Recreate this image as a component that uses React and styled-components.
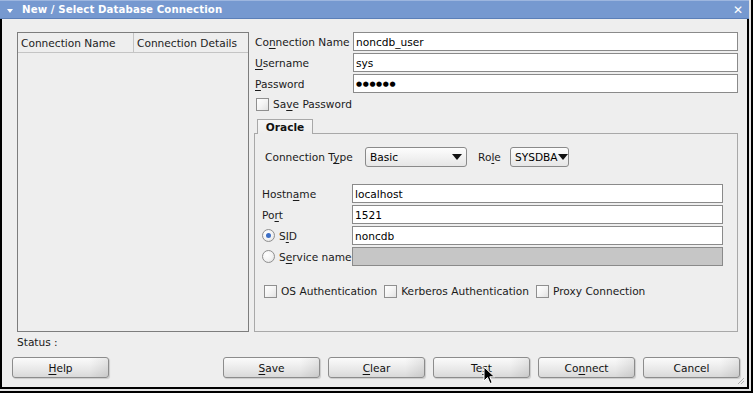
import React from "react";
import styled, { createGlobalStyle } from "styled-components";

const Global = createGlobalStyle`
  html, body { margin: 0; padding: 0; background: #eeeeee; }
  body { font-family: "DejaVu Sans", "Liberation Sans", sans-serif; font-size: 10.6px; color: #1a1a1a; }
  * { box-sizing: border-box; }
`;

const Window = styled.div`
  position: relative;
  width: 753px;
  height: 393px;
  display: flex;
  flex-direction: column;
  background: #e4e4e4;
  border-right: 2px solid #000;
  border-bottom: 2px solid #000;
  padding: 0 2px 2px 0;
`;

const TitleBar = styled.div`
  height: 19px;
  flex: none;
  display: flex;
  align-items: center;
  background: #7699d0;
  border-top: 1px solid #9db6df;
  border-bottom: 1px solid #5b7fb8;
  color: #fff;
  font-weight: bold;
  font-size: 10.2px;
  padding: 0 6px 0 7px;
`;

const Arrow = styled.span`
  width: 0;
  height: 0;
  border-left: 3px solid transparent;
  border-right: 3px solid transparent;
  border-top: 4px solid #fff;
  margin: 2px 9px 0 0;
`;

const Title = styled.span`
  flex: 1;
  letter-spacing: 0.1px;
`;

const Close = styled.span`
  font-size: 12px;
  font-weight: bold;
`;

const Frame = styled.div`
  flex: 1;
  display: flex;
  flex-direction: column;
  background: #eeeeee;
  border-left: 2px solid #000;
  border-right: 2px solid #000;
  border-bottom: 2px solid #000;
  padding: 0 7px 0 10px;
`;

const Main = styled.div`
  display: flex;
  gap: 5px;
  height: 300px;
  margin: 13px 2px 0 5px;
`;

const Table = styled.div`
  width: 232px;
  flex: none;
  border: 1px solid #7d7d7d;
  background: #eeeeee;
`;

const HeadRow = styled.div`
  display: flex;
  height: 20px;
  border-bottom: 1px solid #c4c4c4;
`;

const HeadCell = styled.div`
  width: ${(p) => p.$w}px;
  display: flex;
  align-items: center;
  padding-left: 3px;
  border-right: ${(p) => (p.$last ? "none" : "1px solid #c4c4c4")};
  color: #222;
`;

const Form = styled.div`
  flex: 1;
  display: flex;
  flex-direction: column;
`;

const Fields = styled.div`
  display: flex;
  flex-direction: column;
  gap: ${(p) => p.$gap || 2}px;
  padding-left: ${(p) => p.$pad || 0}px;
  padding-right: ${(p) => p.$right || 0}px;
  margin-top: ${(p) => p.$top || 0}px;
`;

const Row = styled.div`
  display: flex;
  align-items: center;
  height: 19px;
`;

const Label = styled.label`
  width: ${(p) => p.$w}px;
  flex: none;
  padding-left: ${(p) => p.$pad || 0}px;
  display: flex;
  align-items: center;
  gap: 4px;
  color: #1a1a1a;
  white-space: nowrap;
`;

const Input = styled.div`
  flex: 1;
  height: 19px;
  background: ${(p) => (p.$disabled ? "#c6c6c6" : "#ffffff")};
  border: 1px solid #8a8a8a;
  display: flex;
  align-items: center;
  padding-left: 2px;
  font-size: ${(p) => (p.$dots ? "7px" : "inherit")};
  letter-spacing: ${(p) => (p.$dots ? "0.6px" : "0")};
  color: #000;
`;

const U = styled.span`
  text-decoration: underline;
  text-underline-offset: 2px;
`;

const Check = styled.span`
  width: 13px;
  height: 13px;
  flex: none;
  border: 1px solid #8f8f8f;
  background: linear-gradient(135deg, #ffffff 0%, #f4f4f4 50%, #e2e2e2 100%);
`;

const CheckRow = styled.div`
  display: flex;
  align-items: center;
  gap: ${(p) => p.$gap || 5}px;
  height: 14px;
  margin-top: ${(p) => p.$top || 0}px;
  padding-left: ${(p) => p.$pad || 0}px;
`;

const CheckItem = styled.span`
  display: flex;
  align-items: center;
  gap: 4px;
  margin-right: 3px;
`;

const Radio = styled.span`
  width: 13px;
  height: 13px;
  flex: none;
  border-radius: 50%;
  border: 1px solid #8f8f8f;
  background: radial-gradient(circle at 35% 35%, #ffffff 0%, #f2f2f2 55%, #d8d8d8 100%);
  display: flex;
  align-items: center;
  justify-content: center;
  &::after {
    content: "";
    width: 5px;
    height: 5px;
    border-radius: 50%;
    background: ${(p) => (p.$on ? "#3d6fc6" : "transparent")};
  }
`;

const Tab = styled.div`
  margin: 8px 0 -1px 3px;
  width: 56px;
  height: 15px;
  border: 1px solid #a8a8a8;
  border-bottom: none;
  background: linear-gradient(#f6f6f6, #eeeeee);
  font-weight: bold;
  display: flex;
  align-items: center;
  justify-content: center;
  position: relative;
  z-index: 1;
  color: #111;
`;

const Panel = styled.div`
  flex: 1;
  border: 1px solid #a8a8a8;
  display: flex;
  flex-direction: column;
`;

const TypeRow = styled.div`
  display: flex;
  align-items: center;
  height: 20px;
  margin-top: 13px;
  padding-left: 10px;
`;

const Select = styled.div`
  width: ${(p) => p.$w}px;
  height: 20px;
  flex: none;
  border: 1px solid #8a8a8a;
  border-radius: 3px;
  background: linear-gradient(#fdfdfd, #e6e6e6);
  display: flex;
  align-items: center;
  justify-content: space-between;
  padding: 0 4px 0 4px;
  margin-right: ${(p) => p.$mr || 0}px;
  color: #000;
  &::after {
    content: "";
    border-left: 5px solid transparent;
    border-right: 5px solid transparent;
    border-top: 6px solid #111;
  }
`;

const Status = styled.div`
  height: 16px;
  margin-top: 2px;
  padding-left: 5px;
  display: flex;
  align-items: center;
`;

const Buttons = styled.div`
  display: flex;
  margin-top: 7px;
  gap: 8px;
`;

const Button = styled.div`
  width: 97px;
  height: 21px;
  border: 1px solid #8c8c8c;
  border-radius: 3px;
  background: linear-gradient(90deg, rgba(0,0,0,0) 80%, rgba(0,0,0,0.08) 100%), linear-gradient(#fbfbfb, #e8e8e8 60%, #d9d9d9);
  box-shadow: 1px 1px 1px rgba(0, 0, 0, 0.15);
  display: flex;
  align-items: center;
  justify-content: center;
  margin-right: ${(p) => p.$mr || 0}px;
  color: #111;
`;

const Cursor = styled.svg`
  position: absolute;
  left: 483px;
  top: 366px;
`;

const Grip = styled.svg`
  position: absolute;
  right: 6px;
  bottom: 6px;
`;

export default function App() {
  return (
    <>
      <Global />
      <Window>
        <TitleBar>
          <Arrow />
          <Title>New / Select Database Connection</Title>
          <Close>✕</Close>
        </TitleBar>
        <Frame>
          <Main>
            <Table>
              <HeadRow>
                <HeadCell $w={116}>Connection Name</HeadCell>
                <HeadCell $w={114} $last>Connection Details</HeadCell>
              </HeadRow>
            </Table>
            <Form>
              <Fields>
                <Row>
                  <Label $w={99} $pad={1}>
                    <span>Co<U>n</U>nection Name</span>
                  </Label>
                  <Input>noncdb_user</Input>
                </Row>
                <Row>
                  <Label $w={99} $pad={1}>
                    <span><U>U</U>sername</span>
                  </Label>
                  <Input>sys</Input>
                </Row>
                <Row>
                  <Label $w={99} $pad={1}>
                    <span><U>P</U>assword</span>
                  </Label>
                  <Input $dots>●●●●●●</Input>
                </Row>
              </Fields>
              <CheckRow $top={4} $pad={2} $gap={4}>
                <Check />
                <span>Sa<U>v</U>e Password</span>
              </CheckRow>
              <Tab>Oracle</Tab>
              <Panel>
                <TypeRow>
                  <Label $w={100}>
                    <span>Connection T<U>y</U>pe</span>
                  </Label>
                  <Select $w={102} $mr={11}>Basic</Select>
                  <Label $w={32}>
                    <span>Ro<U>l</U>e</span>
                  </Label>
                  <Select $w={59}>SYSDBA</Select>
                </TypeRow>
                <Fields $pad={7} $right={14} $top={17}>
                  <Row>
                    <Label $w={90}>
                      <span>Hostn<U>a</U>me</span>
                    </Label>
                    <Input>localhost</Input>
                  </Row>
                  <Row>
                    <Label $w={90}>
                      <span>Po<U>r</U>t</span>
                    </Label>
                    <Input>1521</Input>
                  </Row>
                  <Row>
                    <Label $w={90}>
                      <Radio $on />
                      <span>S<U>I</U>D</span>
                    </Label>
                    <Input>noncdb</Input>
                  </Row>
                  <Row>
                    <Label $w={90}>
                      <Radio />
                      <span>S<U>e</U>rvice name</span>
                    </Label>
                    <Input $disabled />
                  </Row>
                </Fields>
                <CheckRow $top={18} $pad={9} $gap={4}>
                  <CheckItem><Check /><span>OS Authentication</span></CheckItem>
                  <CheckItem><Check /><span>Kerberos Authentication</span></CheckItem>
                  <CheckItem><Check /><span>Proxy Connection</span></CheckItem>
                </CheckRow>
              </Panel>
            </Form>
          </Main>
          <Status>Status :</Status>
          <Buttons>
            <Button $mr={106}><span><U>H</U>elp</span></Button>
            <Button><span><U>S</U>ave</span></Button>
            <Button><span><U>C</U>lear</span></Button>
            <Button><span>Te<U>s</U>t</span></Button>
            <Button><span>Co<U>n</U>nect</span></Button>
            <Button>Cancel</Button>
          </Buttons>
        </Frame>
        <Grip width="9" height="9" viewBox="0 0 9 9">
          <path d="M8 2 L2 8 M8 5 L5 8" stroke="#b0b0b0" strokeWidth="1" />
        </Grip>
        <Cursor width="13" height="20" viewBox="0 0 13 20">
          <path d="M1 1 L1 15 L4.5 11.5 L7 17.5 L9.2 16.6 L6.8 10.8 L11.5 10.8 Z" fill="#000" stroke="#fff" strokeWidth="1" strokeLinejoin="round" />
        </Cursor>
      </Window>
    </>
  );
}
